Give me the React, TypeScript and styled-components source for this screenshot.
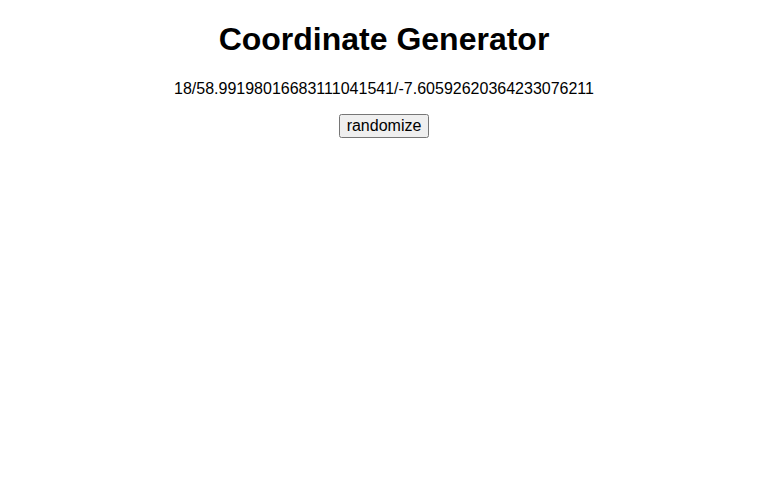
import { useState } from "react";
import { createGlobalStyle, styled } from "styled-components";

const GlobalStyle = createGlobalStyle`
  body {
    margin: 0;
    font-family: "Liberation Sans", Arial, sans-serif;
    color: #000;
    background: #fff;
  }
`;

const makeCoords = () => {
  const zoom = Math.floor(Math.random() * 19);
  const lat = Math.random() * 170 - 85;
  const lng = Math.random() * 360 - 180;
  return `${zoom}/${lat}/${lng}`;
};

const App = () => {
  const [coords, setCoords] = useState("18/58.99198016683111041541/-7.60592620364233076211");

  return (
    <>
      <GlobalStyle />
      <Page>
        <Title>Coordinate Generator</Title>
        <Coords>{coords}</Coords>
        <RandomButton onClick={() => setCoords(makeCoords())}>randomize</RandomButton>
      </Page>
    </>
  );
};

export default App;

const Page = styled.div`
  text-align: center;
`;

const Title = styled.h1`
  font-size: 32px;
  font-weight: bold;
  margin: 21.44px 0;
`;

const Coords = styled.p`
  font-size: 16px;
  margin: 16px 0;
`;

const RandomButton = styled.button`
  font-family: "Liberation Sans", Arial, sans-serif;
  font-size: 16px;
`;
